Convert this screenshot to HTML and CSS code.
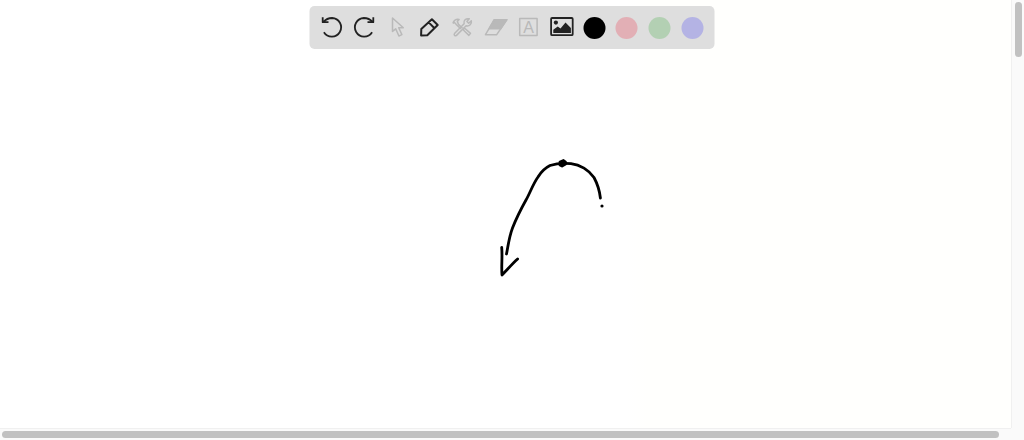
FILE: index.html
```
<!DOCTYPE html>
<html lang="en">
<head>
    <meta charset="UTF-8">
    <meta name="viewport" content="width=device-width, initial-scale=1.0">
    <title>Whiteboard</title>
    <link rel="stylesheet" href="styles.css">
</head>
<body>
    <div class="board">
        <main class="canvas">
            <svg class="drawing" role="img" aria-label="Curved arrow">
                <path d="M600.4 198C599.6 191 597.5 184 594 177.5C589 170 580 164.5 571 163.6C564 163 556 163.5 550 165.5C545 168 541 172 538 177C533 184 530 193 526 200C521 209 516 219 512.5 228C509 237 508 247 506.5 254"/>
                <path d="M501.7 247.5C502.6 257 501.2 266 502 275C507 270 512 264 517.6 259"/>
                <path class="dot" d="M560 162L563.5 160.5L565.5 162V164L562 166L560 165Z"/>
                <circle class="dot-small" cx="602" cy="206" r="1.6"/>
            </svg>
        </main>
        <div class="scroll-y"><div class="thumb"></div></div>
        <div class="scroll-x"><div class="thumb"></div></div>
    </div>

    <div class="toolbar" role="toolbar" aria-label="Drawing tools">
        <button class="tool" type="button" aria-label="Undo">
            <svg viewBox="0 0 24 24"><path d="M3.2 1.2V6.2H9M3.8 6C6.2 3.4 9 2 12.6 2A9.3 9.3 0 1 1 4.4 16.2"/></svg>
        </button>
        <button class="tool" type="button" aria-label="Redo">
            <svg viewBox="0 0 24 24"><path d="M20.8 1.2V6.2H15M20.2 6C17.8 3.4 15 2 11.4 2A9.3 9.3 0 1 0 19.6 16.2"/></svg>
        </button>
        <button class="tool muted" type="button" aria-label="Select">
            <svg viewBox="0 0 24 24"><path d="M7 2V15.4L10.2 12.8L13.4 20L16.4 18.6L13.2 11.8H17.8Z"/></svg>
        </button>
        <button class="tool" type="button" aria-label="Pen">
            <svg viewBox="0 0 24 24"><path class="bold" d="M3.6 19.4L3.8 13L14.4 3.3L20.2 9L9.8 19.2ZM11.2 6.4L17 12.2"/></svg>
        </button>
        <button class="tool muted" type="button" aria-label="Tools">
            <svg viewBox="0 0 24 24">
                <path d="M2.4 7.4C3 4.6 5.4 2.6 8.6 3.4L6.8 5.4L8 8.4L12 12.2M2.4 7.4L4.2 6.6L6 8.8L10.4 13"/>
                <path d="M18.8 2.8C15.4 2 12.6 4.6 13.6 7.8L4 17.6C3 19 4.6 20.4 6 19.4L15.6 9.8C18.8 10.6 21.6 8 20.8 4.8L18.2 7.2L16.4 5.4Z"/>
                <path d="M12.6 13.8L14.2 12.2L20 17.4L18.4 19.4Z"/>
            </svg>
        </button>
        <button class="tool muted" type="button" aria-label="Eraser">
            <svg viewBox="0 0 24 24">
                <path d="M2 18.7L10.8 3.7H23.4L13.2 18.7Z"/>
                <path class="solid" d="M5.5 12.8L10.8 3.7H23.4L17.2 12.8Z"/>
            </svg>
        </button>
        <button class="tool muted" type="button" aria-label="Text">
            <svg viewBox="0 0 24 24">
                <rect x="3.2" y="2.6" width="17.4" height="17"/>
                <text x="12" y="17">A</text>
            </svg>
        </button>
        <button class="tool" type="button" aria-label="Image">
            <svg viewBox="0 0 24 24">
                <rect x="1.6" y="2" width="21.6" height="17.2" rx="1"/>
                <circle class="flat" cx="6.4" cy="6.6" r="2.1"/>
                <path class="flat" d="M3.8 17V13.8L8.2 10.6L11 12.6L16 6.4L21.4 12V17Z"/>
            </svg>
        </button>
        <button class="color black" type="button" aria-label="Black"></button>
        <button class="color red" type="button" aria-label="Red"></button>
        <button class="color green" type="button" aria-label="Green"></button>
        <button class="color blue" type="button" aria-label="Blue"></button>
    </div>
</body>
</html>
```
FILE: styles.css
```
* {
    box-sizing: border-box;
}
body {
    margin: 0;
    background: #fff;
    font-family: Roboto, sans-serif;
}
.board {
    display: grid;
    grid-template-columns: 1fr 13px;
    grid-template-rows: 1fr 12px;
    height: 100vh;
    background: #fafafa;
}
.canvas {
    min-width: 0;
    min-height: 0;
    overflow: hidden;
    background: linear-gradient(to right, #fff 62%, #fffffd 64%);
}
.drawing {
    display: block;
    width: 100%;
    height: 100%;
    fill: none;
    stroke: #000;
    stroke-width: 2.8;
    stroke-linecap: round;
    stroke-linejoin: round;
}
.dot {
    fill: #000;
}
.dot-small {
    fill: #000;
    stroke: none;
}
.scroll-y {
    padding: 2px 2px 2px 3px;
    border-left: 1px solid #f0f0f0;
}
.scroll-x {
    padding: 2px;
    border-top: 1px solid #f0f0f0;
}
.thumb {
    border-radius: 4px;
    background: #c1c1c1;
}
.scroll-y .thumb {
    height: 13%;
}
.scroll-x .thumb {
    width: 99%;
    height: 7px;
}

/* toolbar */
.toolbar {
    position: absolute;
    top: 6px;
    left: 50%;
    transform: translateX(-50%);
    display: flex;
    align-items: center;
    justify-content: space-between;
    width: 405px;
    max-width: 100%;
    padding: 10px 10px 9px;
    border-radius: 5px;
    background: #dedede;
}
.tool {
    width: 24px;
    height: 24px;
    padding: 0;
    border: none;
    background: none;
    color: #222;
    cursor: pointer;
}
.tool svg {
    display: block;
    width: 24px;
    height: 24px;
    overflow: visible;
    fill: none;
    stroke: currentColor;
    stroke-width: 1.8;
    stroke-linejoin: round;
}
.tool.muted {
    color: #b9b9b9;
}
.tool.muted svg {
    stroke-width: 1.5;
}
.tool .bold {
    stroke-width: 2;
}
.tool .solid {
    fill: currentColor;
}
.tool .flat {
    fill: currentColor;
    stroke: none;
}
.tool text {
    fill: currentColor;
    stroke: none;
    font-size: 16px;
    font-weight: 500;
    text-anchor: middle;
}
.color {
    width: 22px;
    height: 22px;
    margin: 0 1px;
    padding: 0;
    border: none;
    border-radius: 50%;
    cursor: pointer;
}
.black {
    background: #000;
}
.red {
    background: #e2afb5;
}
.green {
    background: #b3d0b3;
}
.blue {
    background: #b4b3e4;
}
```
